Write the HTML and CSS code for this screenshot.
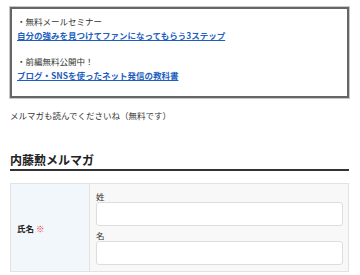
FILE: index.html
```html
<!DOCTYPE html>
<html lang="ja">
<head>
    <meta charset="UTF-8">
    <meta name="viewport" content="width=device-width, initial-scale=1.0">
    <title>内藤勲メルマガ</title>
    <link rel="stylesheet" href="styles.css">
</head>
<body>

    <!-- お知らせボックス -->
    <div class="notice-box">
        <p class="notice-line">・無料メールセミナー</p>
        <p class="notice-line"><a href="#">自分の強みを見つけてファンになってもらう3ステップ</a></p>
        <p class="notice-line gap">・前編無料公開中！</p>
        <p class="notice-line"><a href="#">ブログ・SNSを使ったネット発信の教科書</a></p>
    </div>

    <p class="intro">メルマガも読んでくださいね（無料です）</p>

    <h2 class="section-title">内藤勲メルマガ</h2>

    <!-- 登録フォーム -->
    <table class="form-table">
        <colgroup>
            <col class="col-label">
            <col>
        </colgroup>
        <tr>
            <th>氏名 <span class="req">※</span></th>
            <td>
                <div class="field-label">姓</div>
                <input type="text" class="field-input">
                <div class="field-label">名</div>
                <input type="text" class="field-input last">
            </td>
        </tr>
    </table>

</body>
</html>
```

FILE: styles.css
```css
body {
    margin: 0;
    padding: 7px 11px 0 10px;
    font-family: "Noto Sans CJK JP", "Noto Sans", sans-serif;
    font-size: 8.5px;
    color: #333;
    background-color: #fff;
}
.notice-box {
    border: 2px solid #666;
    box-shadow: 0 0 0 1px #c8c8c8;
    padding: 5px 6px 14px 5px;
}
.notice-line {
    margin: 0;
    line-height: 14px;
}
.notice-line.gap {
    margin-top: 12px;
}
.notice-line a {
    color: #1f5fbf;
    font-weight: bold;
}
.intro {
    margin: 10px 0 0;
    line-height: 14px;
}
.section-title {
    margin: 30px 0 0;
    font-size: 12px;
    line-height: 16px;
    padding-bottom: 1px;
    border-bottom: 2px solid #333;
    color: #222;
}
.form-table {
    margin-top: 12px;
    width: 100%;
    border-collapse: collapse;
    table-layout: fixed;
}
.col-label {
    width: 79px;
}
.form-table th,
.form-table td {
    border: 1px solid #e3e3e3;
}
.form-table th {
    background-color: #f2f7fc;
    text-align: left;
    padding: 0 6px;
    font-weight: bold;
    color: #222;
}
.form-table td {
    background-color: #f8f8f8;
    padding: 6px 5px 6px 6px;
}
.req {
    color: #e53935;
    font-weight: bold;
}
.field-label {
    line-height: 12px;
    margin-bottom: 0;
}
.field-input {
    display: block;
    box-sizing: border-box;
    width: 100%;
    height: 24px;
    margin: 0 0 3px;
    border: 1px solid #ddd;
    border-radius: 3px;
    background-color: #fff;
}
.field-input.last {
    margin-bottom: 0;
}
```
